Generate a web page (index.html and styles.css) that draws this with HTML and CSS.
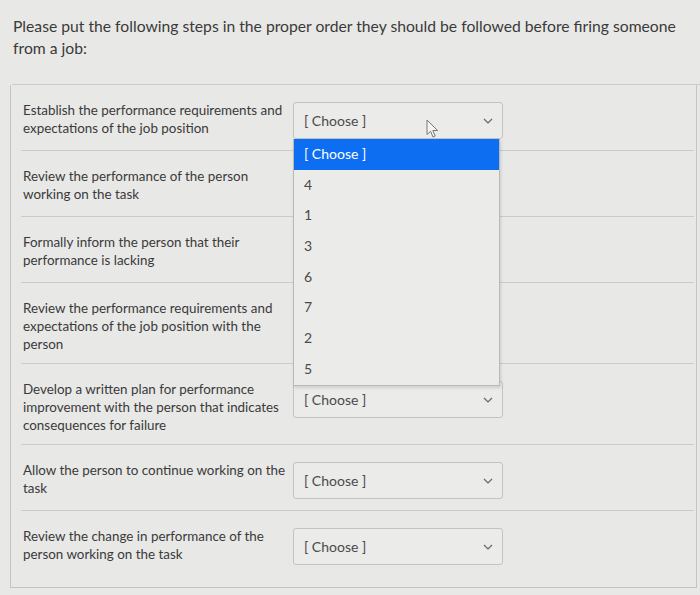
FILE: index.html
```html
<!DOCTYPE html>
<html lang="en">
<head>
  <meta charset="UTF-8"/>
  <meta name="viewport" content="width=device-width, initial-scale=1.0"/>
  <title>Ordering question</title>
  <link rel="stylesheet" href="styles.css">
</head>
<body>
  <div class="quiz">
    <p class="prompt">Please put the following steps in the proper order they should be followed before firing someone from a job:</p>

    <div class="answers">
      <div class="row">
        <div class="label">Establish the performance requirements and expectations of the job position</div>
        <div class="choice">
          <div class="select"><span>[ Choose ]</span>
            <svg class="chev" width="10" height="6" viewBox="0 0 10 6"><polyline points="1,1 5,5 9,1"/></svg>
          </div>
          <!-- open dropdown -->
          <ul class="dropdown">
            <li class="active">[ Choose ]</li>
            <li>4</li>
            <li>1</li>
            <li>3</li>
            <li>6</li>
            <li>7</li>
            <li>2</li>
            <li>5</li>
          </ul>
        </div>
      </div>

      <!-- the next three selects sit under the open dropdown -->
      <div class="row">
        <div class="label">Review the performance of the person working on the task</div>
        <div class="choice covered">
          <div class="select"><span>[ Choose ]</span>
            <svg class="chev" width="10" height="6" viewBox="0 0 10 6"><polyline points="1,1 5,5 9,1"/></svg>
          </div>
        </div>
      </div>

      <div class="row">
        <div class="label">Formally inform the person that their performance is lacking</div>
        <div class="choice covered">
          <div class="select"><span>[ Choose ]</span>
            <svg class="chev" width="10" height="6" viewBox="0 0 10 6"><polyline points="1,1 5,5 9,1"/></svg>
          </div>
        </div>
      </div>

      <div class="row">
        <div class="label">Review the performance requirements and expectations of the job position with the person</div>
        <div class="choice covered">
          <div class="select"><span>[ Choose ]</span>
            <svg class="chev" width="10" height="6" viewBox="0 0 10 6"><polyline points="1,1 5,5 9,1"/></svg>
          </div>
        </div>
      </div>

      <div class="row">
        <div class="label">Develop a written plan for performance improvement with the person that indicates consequences for failure</div>
        <div class="choice">
          <div class="select"><span>[ Choose ]</span>
            <svg class="chev" width="10" height="6" viewBox="0 0 10 6"><polyline points="1,1 5,5 9,1"/></svg>
          </div>
        </div>
      </div>

      <div class="row">
        <div class="label">Allow the person to continue working on the task</div>
        <div class="choice">
          <div class="select"><span>[ Choose ]</span>
            <svg class="chev" width="10" height="6" viewBox="0 0 10 6"><polyline points="1,1 5,5 9,1"/></svg>
          </div>
        </div>
      </div>

      <div class="row">
        <div class="label">Review the change in performance of the person working on the task</div>
        <div class="choice">
          <div class="select"><span>[ Choose ]</span>
            <svg class="chev" width="10" height="6" viewBox="0 0 10 6"><polyline points="1,1 5,5 9,1"/></svg>
          </div>
        </div>
      </div>
    </div>

    <!-- mouse pointer -->
    <svg class="cursor" width="14" height="20" viewBox="0 0 14 20">
      <path d="M1 1 L1 15.5 L4.6 12.3 L7 18 L9.2 17 L6.8 11.5 L11.6 11.5 Z"/>
    </svg>
  </div>
</body>
</html>
```

FILE: styles.css
```css
body { margin: 0; background-color: #e8e8e6; font-family: Lato, 'Open Sans', sans-serif; color: #3a3a3a; }
.quiz { position: relative; height: 595px; overflow: hidden; }
.prompt {
  margin: 0 0 0 12px;
  padding: 15px 0 25px 1px;
  font-size: 15.7px;
  line-height: 22px;
  border-bottom: 1px solid #cbcbc9;
}
.answers {
  margin: 0 3px 0 10px;
  padding: 0 0 11px 10px;
  border: 1px solid #c4c4c2;
  border-top: none;
}
.row {
  display: flex;
  align-items: flex-start;
  gap: 4px;
  padding: 12px 0 10px;
  margin-right: 2px;
  border-bottom: 1px solid #cbcbc9;
}
.row:last-child { border-bottom: none; }
.label {
  width: 266px;
  padding: 4px 0 0 2px;
  font-size: 13.4px;
  line-height: 18px;
}
.choice { position: relative; width: 210px; margin: 5px 0 1px; }
.choice.covered { visibility: hidden; }
.select {
  height: 35px;
  display: flex;
  align-items: center;
  justify-content: space-between;
  padding: 0 9px 0 10px;
  border: 1px solid #c3c3c1;
  border-radius: 3px;
  background-color: #ebebe9;
  font-size: 14px;
  color: #4a4a4a;
}
.chev { fill: none; stroke: #666; stroke-width: 1.2; }
.dropdown {
  position: absolute;
  top: 37px;
  left: 0;
  width: 205px;
  margin: 0;
  padding: 0;
  list-style: none;
  background-color: #ebebe9;
  border: 1px solid #b9b9b7;
  border-top: none;
  box-shadow: 1px 2px 3px rgba(0, 0, 0, 0.12);
  z-index: 2;
}
.dropdown li {
  height: 30.7px;
  line-height: 30px;
  padding-left: 10px;
  font-size: 14px;
  color: #4a4a4a;
}
.dropdown li.active { background-color: #0d6ef2; color: white; }
.cursor {
  position: absolute;
  left: 426px;
  top: 119px;
  z-index: 3;
  fill: #f4f4f4;
  stroke: #777;
  stroke-width: 1;
}
```
